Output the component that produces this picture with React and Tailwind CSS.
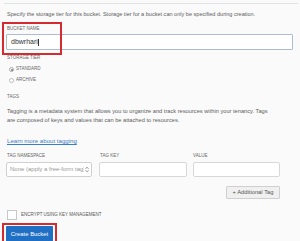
export default function App() {
  return (
    <div className="relative w-[300px] h-[241px] overflow-hidden bg-[#fafafa] text-[#555] [font-family:'Liberation_Sans',Arial,sans-serif]">
      <div className="pt-[3px]">
        <div className="h-px bg-[#e3e3e3] ml-[4px] mr-[2px]" />
      </div>
      <div className="px-[7px] mt-[7px] text-[5.55px] leading-[7px] whitespace-nowrap text-[#5c5c5c]">
        Specify the storage tier for this bucket. Storage tier for a bucket can only be specified during creation.
      </div>

      <div className="px-[6px] mt-[8px]">
        <div className="pl-[1px] text-[4.5px] leading-[6px] uppercase text-[#666]">Bucket Name</div>
        <div className="mt-[2px] w-[287px] h-[16px] bg-white border border-[#aebcd0] rounded-[1px] flex items-center pl-[4px] text-[7px] text-[#333]">
          dbwrhari<span className="ml-[0.5px] w-[0.6px] h-[7px] bg-[#333]" />
        </div>
      </div>

      <div className="px-[7px] mt-[5px] text-[4.5px] leading-[6px] uppercase text-[#666]">Storage Tier</div>
      <div className="pl-[9px] mt-[5px] flex items-center gap-[2px] h-[7px]">
        <span className="w-[5px] h-[5px] rounded-full border border-[#aaa] bg-white flex items-center justify-center">
          <span className="w-[2px] h-[2px] rounded-full bg-[#777]" />
        </span>
        <span className="text-[4.5px] uppercase text-[#666]">Standard</span>
      </div>
      <div className="pl-[9px] mt-[4px] flex items-center gap-[2px] h-[7px]">
        <span className="w-[5px] h-[5px] rounded-full border border-[#bbb] bg-white" />
        <span className="text-[4.5px] uppercase text-[#666]">Archive</span>
      </div>

      <div className="px-[7px] mt-[10px] text-[4.5px] leading-[6px] uppercase text-[#666]">Tags</div>
      <div className="px-[7px] mt-[7px] text-[5.7px] leading-[9px] whitespace-nowrap text-[#5c5c5c]">
        Tagging is a metadata system that allows you to organize and track resources within your tenancy. Tags
        <br />
        are composed of keys and values that can be attached to resources.
      </div>
      <div className="px-[7px] mt-[12px] text-[6.1px] leading-[8px]">
        <span className="text-[#3a7cc8] underline">Learn more about tagging</span>
      </div>

      <div className="px-[6px] mt-[8px] flex gap-[7px] text-[4.5px] leading-[6px] uppercase text-[#666]">
        <div className="w-[86px] pl-[1px]">Tag Namespace</div>
        <div className="w-[88px] pl-[1px]">Tag Key</div>
        <div className="w-[87px] -ml-[1px]">Value</div>
      </div>
      <div className="px-[6px] mt-[3px] flex">
        <div className="w-[86px] h-[15px] bg-white border border-[#d0d0d0] rounded-[2px] flex items-center pl-[3px] pr-[2px] text-[6px] text-[#999]">
          <span className="flex-1 overflow-hidden whitespace-nowrap">None (apply a free-form tag)</span>
          <svg width="4" height="7" viewBox="0 0 4 7" className="ml-[1px] shrink-0">
            <path d="M0.5 2.8 L2 1.2 L3.5 2.8 M0.5 4.2 L2 5.8 L3.5 4.2" fill="none" stroke="#777" strokeWidth="0.8" />
          </svg>
        </div>
        <div className="ml-[7px] w-[88px] h-[15px] bg-white border border-[#d8d8d8] rounded-[2px]" />
        <div className="ml-[6px] w-[87px] h-[15px] bg-white border border-[#d8d8d8] rounded-[2px]" />
      </div>
      <div className="w-[280px] mt-[9px] flex justify-end">
        <div className="w-[54px] h-[13px] bg-[#f0f0f0] border border-[#cfcfcf] rounded-[1px] flex items-center justify-center text-[5.8px] text-[#555]">
          + Additional Tag
        </div>
      </div>

      <div className="pl-[7px] mt-[11px] flex items-center gap-[4px]">
        <span className="w-[10px] h-[10px] bg-white border border-[#c8c8c8]" />
        <span className="text-[4.5px] uppercase text-[#555]">Encrypt using key management</span>
      </div>
      <div className="pl-[6px] mt-[6px]">
        <div className="w-[47px] h-[16px] bg-[#1f6fc5] rounded-[1px] flex items-center justify-center text-[5.9px] text-white">
          Create Bucket
        </div>
      </div>

      <div className="absolute left-[2px] top-[22px] w-[60px] h-[33px] border-2 border-[#d62a31]" />
      <div className="absolute left-[2px] top-[223px] w-[55px] h-[26px] border-2 border-[#d62a31]" />
    </div>
  );
}
